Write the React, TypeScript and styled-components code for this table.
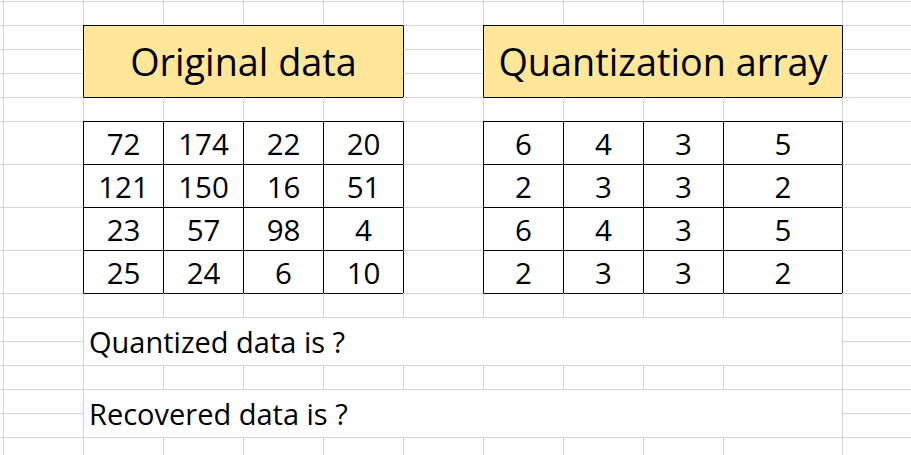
import React from "react";
import styled, { createGlobalStyle } from "styled-components";

const GlobalStyle = createGlobalStyle`
  html, body {
    margin: 0;
    padding: 0;
    background: #ffffff;
    overflow: hidden;
  }
  body {
    font-family: "Open Sans", "Noto Sans", sans-serif;
    color: #000000;
  }
`;

const GRID = "#d4d4d4";
const INK = "#000000";

const Sheet = styled.div`
  display: grid;
  grid-template-columns: 3px repeat(9, 80px) 119px 80px;
  grid-template-rows: 1px repeat(5, 24px) repeat(4, 43px) repeat(7, 24px);
  width: 922px;
  background: #ffffff;
`;

type Kind = "plain" | "header" | "num" | "note";

const Cell = styled.div<{
  $row: number;
  $col: number;
  $rs: number;
  $cs: number;
  $left: string | null;
  $top: string | null;
  $kind: Kind;
}>`
  grid-row: ${(p) => p.$row} / span ${(p) => p.$rs};
  grid-column: ${(p) => p.$col} / span ${(p) => p.$cs};
  box-sizing: border-box;
  display: flex;
  align-items: center;
  min-width: 0;
  overflow: visible;
  white-space: nowrap;
  border-left: ${(p) => (p.$left ? `1px solid ${p.$left}` : "none")};
  border-top: ${(p) => (p.$top ? `1px solid ${p.$top}` : "none")};
  background: ${(p) => (p.$kind === "header" ? "#ffe699" : "#ffffff")};
  justify-content: ${(p) => (p.$kind === "note" ? "flex-start" : "center")};
  padding-left: ${(p) => (p.$kind === "note" ? "5px" : "0")};
  padding-top: ${(p) => (p.$kind === "num" ? "2px" : "0")};
  font-size: ${(p) =>
    p.$kind === "header" ? "37.8px" : p.$kind === "note" ? "29px" : "29.5px"};
  line-height: 1;
  letter-spacing: 0;
`;

type Merge = {
  r: number;
  c: number;
  rs: number;
  cs: number;
  kind: Kind;
  text: string;
  boxed: boolean;
};

const merges: Merge[] = [
  { r: 2, c: 2, rs: 3, cs: 4, kind: "header", text: "Original data", boxed: true },
  { r: 2, c: 7, rs: 3, cs: 4, kind: "header", text: "Quantization array", boxed: true },
  { r: 11, c: 2, rs: 2, cs: 9, kind: "note", text: "Quantized data is ?", boxed: false },
  { r: 14, c: 2, rs: 2, cs: 9, kind: "note", text: "Recovered data is ?", boxed: false },
];

const original = [
  [72, 174, 22, 20],
  [121, 150, 16, 51],
  [23, 57, 98, 4],
  [25, 24, 6, 10],
];

const quantization = [
  [6, 4, 3, 5],
  [2, 3, 3, 2],
  [6, 4, 3, 5],
  [2, 3, 3, 2],
];

const TABLE_ROW = 6;
const ORIG_COL = 2;
const QUANT_COL = 7;
const ROWS = 17;
const COLS = 12;

const findMerge = (r: number, c: number) =>
  merges.find((m) => r >= m.r && r < m.r + m.rs && c >= m.c && c < m.c + m.cs);

const tableValue = (r: number, c: number): number | null => {
  const i = r - TABLE_ROW;
  if (i < 0 || i > 3) return null;
  if (c >= ORIG_COL && c < ORIG_COL + 4) return original[i][c - ORIG_COL];
  if (c >= QUANT_COL && c < QUANT_COL + 4) return quantization[i][c - QUANT_COL];
  return null;
};

const isBoxed = (r: number, c: number) => {
  if (r < 0 || c < 0) return false;
  const m = findMerge(r, c);
  if (m) return m.boxed;
  return tableValue(r, c) !== null;
};

export default function App() {
  const cells: React.ReactNode[] = [];
  for (let r = 0; r < ROWS; r++) {
    for (let c = 0; c < COLS; c++) {
      const m = findMerge(r, c);
      if (m && (m.r !== r || m.c !== c)) continue;
      const left = c === 0 ? null : isBoxed(r, c) || isBoxed(r, c - 1) ? INK : GRID;
      const top = r === 0 ? null : isBoxed(r, c) || isBoxed(r - 1, c) ? INK : GRID;
      if (m) {
        cells.push(
          <Cell
            key={`${r}-${c}`}
            $row={r + 1}
            $col={c + 1}
            $rs={m.rs}
            $cs={m.cs}
            $left={left}
            $top={top}
            $kind={m.kind}
          >
            {m.text}
          </Cell>
        );
        continue;
      }
      const v = tableValue(r, c);
      cells.push(
        <Cell
          key={`${r}-${c}`}
          $row={r + 1}
          $col={c + 1}
          $rs={1}
          $cs={1}
          $left={left}
          $top={top}
          $kind={v !== null ? "num" : "plain"}
        >
          {v !== null ? v : null}
        </Cell>
      );
    }
  }
  return (
    <>
      <GlobalStyle />
      <Sheet>{cells}</Sheet>
    </>
  );
}
